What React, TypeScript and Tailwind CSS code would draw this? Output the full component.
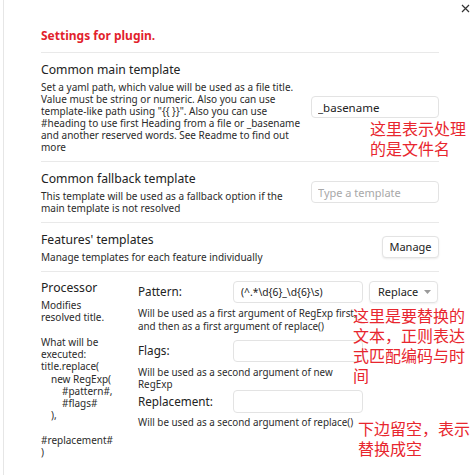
import React from "react";

const font = { fontFamily: '"Noto Sans", "Noto Sans CJK SC", sans-serif' };

const Note = ({ className, children }: { className: string; children: React.ReactNode }) => (
  <div
    className={`absolute text-[16px] leading-[20px] text-[#e8262e] ${className}`}
    style={{ fontFamily: '"Noto Sans CJK SC", sans-serif' }}
  >
    {children}
  </div>
);

const SettingItem = ({
  name,
  children,
  control,
}: {
  name: string;
  children: React.ReactNode;
  control: React.ReactNode;
}) => (
  <div className="flex items-center justify-between border-b border-[#e9e9e9] pt-[8px] pb-[8px]">
    <div>
      <div className="text-[12.2px] leading-[18px] text-[#222]">{name}</div>
      <div className="mt-[2px] text-[10px] leading-[12px] text-[#2b2b2b]">{children}</div>
    </div>
    {control}
  </div>
);

const App = () => {
  return (
    <div className="relative h-[475px] w-[474px] overflow-hidden bg-white" style={font}>
      <div className="ml-[3px] h-full border-l border-[#e6e6e6] pl-[37px] pr-[35px]">
        {/* close */}
        <button className="absolute right-[4px] top-[4px] text-[#333]">
          <svg width="9" height="9" viewBox="0 0 9 9">
            <path d="M1 1L8 8M8 1L1 8" stroke="currentColor" strokeWidth="1.2" />
          </svg>
        </button>

        <div className="border-b border-[#e9e9e9] pt-[27px] pb-[7px]">
          <h2 className="text-[12px] font-bold leading-[18px] text-[#e21f2c]">Settings for plugin.</h2>
        </div>

        <SettingItem
          name="Common main template"
          control={
            <input
              defaultValue="_basename"
              className="h-[22px] w-[128px] rounded-[4px] border border-[#e3e3e3] px-[6px] text-[11.5px] text-[#222] outline-none"
            />
          }
        >
          Set a yaml path, which value will be used as a file title.
          <br />
          Value must be string or numeric. Also you can use
          <br />
          template-like path using "{"{{ }}"}". Also you can use
          <br />
          #heading to use first Heading from a file or _basename
          <br />
          and another reserved words. See Readme to find out
          <br />
          more
        </SettingItem>

        <SettingItem
          name="Common fallback template"
          control={
            <input
              placeholder="Type a template"
              className="h-[22px] w-[128px] rounded-[4px] border border-[#e3e3e3] px-[6px] text-[11px] text-[#222] outline-none placeholder:text-[#a8a8a8]"
            />
          }
        >
          This template will be used as a fallback option if the
          <br />
          main template is not resolved
        </SettingItem>

        <SettingItem
          name="Features' templates"
          control={
            <button className="h-[22px] w-[57px] rounded-[4px] border border-[#e3e3e3] bg-white text-[11px] text-[#222] shadow-[0_1px_2px_rgba(0,0,0,0.08)]">
              Manage
            </button>
          }
        >
          Manage templates for each feature individually
        </SettingItem>

        {/* processor */}
        <div className="flex pt-[7px]">
          <div className="w-[97px] shrink-0">
            <div className="text-[12.2px] leading-[18px] text-[#222]">Processor</div>
            <div className="mt-[2px] text-[10px] leading-[12.25px] text-[#2b2b2b]">
              <div>Modifies</div>
              <div>resolved title.</div>
              <div>&nbsp;</div>
              <div>What will be</div>
              <div>executed:</div>
              <div>title.replace(</div>
              <div className="pl-[10px]">new RegExp(</div>
              <div className="pl-[21px]">#pattern#,</div>
              <div className="pl-[21px]">#flags#</div>
              <div className="pl-[10px]">),</div>
              <div>&nbsp;</div>
              <div>#replacement#</div>
              <div>)</div>
            </div>
          </div>

          <div className="mt-[2px] flex-1 text-[#222]">
            <div className="flex h-[22px] items-center">
              <div className="w-[95px] text-[11.7px]">Pattern:</div>
              <input
                defaultValue="(^.*\d{6}_\d{6}\s)"
                className="h-[22px] w-[130px] rounded-[4px] border border-[#e3e3e3] px-[7px] text-[10.3px] text-[#222] outline-none"
              />
              <div className="ml-[6px] flex h-[22px] w-[69px] items-center justify-between rounded-[4px] border border-[#e3e3e3] pl-[8px] pr-[6px] text-[11px] shadow-[0_1px_2px_rgba(0,0,0,0.06)]">
                <span>Replace</span>
                <svg width="7" height="4" viewBox="0 0 7 4">
                  <path d="M0 0H7L3.5 4Z" fill="#9a9a9a" />
                </svg>
              </div>
            </div>
            <div className="mt-[4px] text-[9.85px] leading-[12.5px] text-[#2b2b2b]">
              Will be used as a first argument of RegExp first,
              <br />
              and then as a first argument of replace()
            </div>

            <div className="mt-[8px] flex h-[22px] items-center">
              <div className="w-[95px] text-[11.7px]">Flags:</div>
              <input className="h-[22px] w-[130px] rounded-[4px] border border-[#e3e3e3] outline-none" />
            </div>
            <div className="mt-[4px] text-[9.85px] leading-[12px] text-[#2b2b2b]">
              Will be used as a second argument of new
              <br />
              RegExp
            </div>

            <div className="flex h-[23px] items-center">
              <div className="w-[95px] text-[11.7px]">Replacement:</div>
              <input className="h-[23px] w-[130px] rounded-[4px] border border-[#e3e3e3] outline-none" />
            </div>
            <div className="mt-[3px] text-[9.85px] leading-[12px] text-[#2b2b2b]">
              Will be used as a second argument of replace()
            </div>
          </div>
        </div>
      </div>

      <Note className="left-[370px] top-[118px]">
        这里表示处理
        <br />
        的是文件名
      </Note>
      <Note className="left-[353px] top-[305px] leading-[20.5px]">
        这里是要替换的
        <br />
        文本，正则表达
        <br />
        式匹配编码与时
        <br />
        间
      </Note>
      <Note className="left-[358px] top-[418px] leading-[19.5px]">
        下边留空，表示
        <br />
        替换成空
      </Note>
    </div>
  );
};

export default App;
